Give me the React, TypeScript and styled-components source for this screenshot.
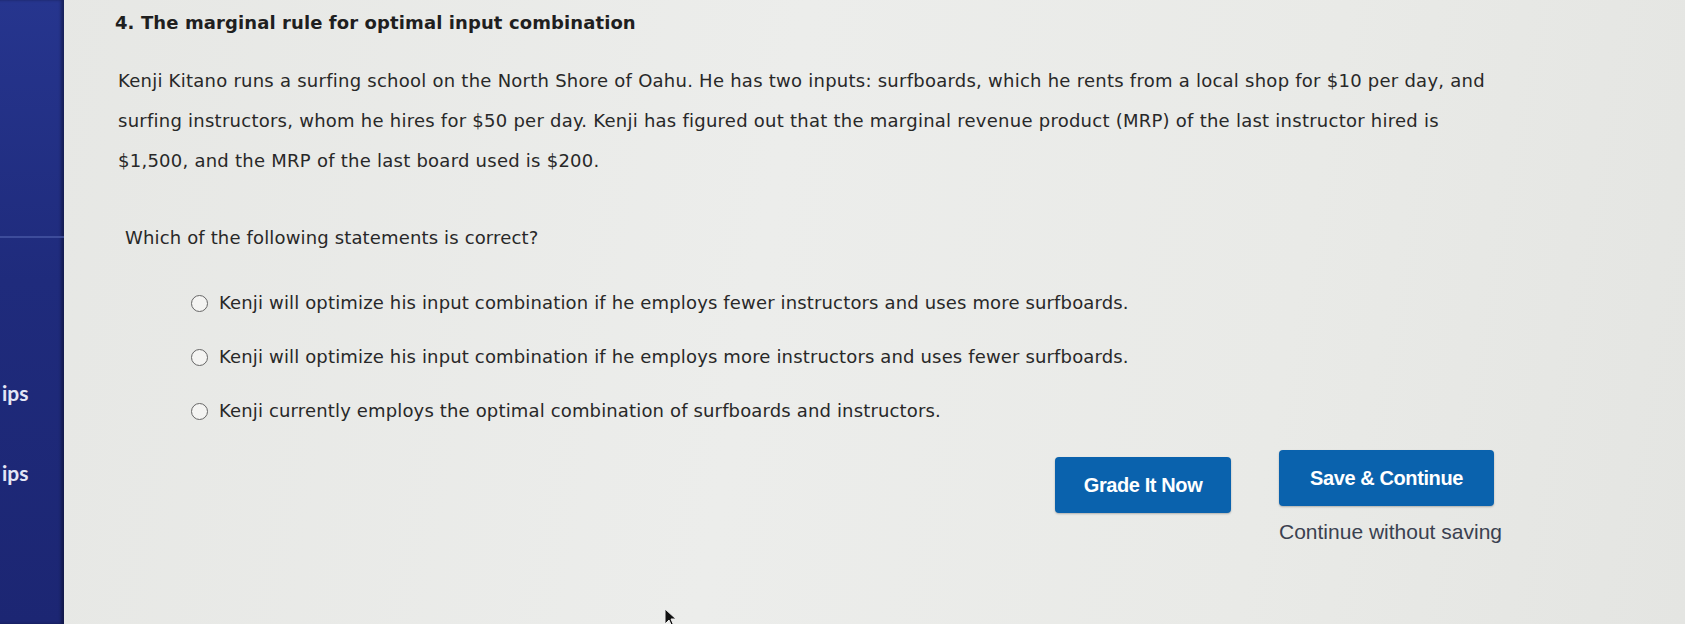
import styled, { createGlobalStyle } from "styled-components"

const GlobalStyle = createGlobalStyle`
  html, body {
    margin: 0;
    padding: 0;
    background: #e8e9e6;
  }
  body {
    font-family: "DejaVu Sans", Verdana, sans-serif;
    color: #282828;
  }
`

// Layout
const Page = styled.div`
  display: flex;
  width: 1685px;
  height: 624px;
  overflow: hidden;
  position: relative;
  background: linear-gradient(100deg, #e6e7e4 0%, #ecedeb 45%, #e9eae7 75%, #e4e5e2 100%);
`

const Sidebar = styled.aside`
  width: 64px;
  flex-shrink: 0;
  display: flex;
  flex-direction: column;
  overflow: hidden;
  background: linear-gradient(180deg, #26358e 0%, #1f2b7c 45%, #1c2673 100%);
  box-shadow: inset -3px 0 3px rgba(0, 0, 0, 0.35);
`

const SideRule = styled.div`
  margin-top: 236px;
  height: 2px;
  background: #4a5aa6;
  opacity: 0.7;
`

const SideLabel = styled.div<{ $top: number }>`
  margin-top: ${p => p.$top}px;
  margin-left: 2px;
  font-family: Lato, "Open Sans", sans-serif;
  font-weight: 700;
  font-size: 21px;
  line-height: 24px;
  color: #e4e6f6;
  white-space: nowrap;
`

const Main = styled.main`
  flex: 1;
  padding: 11px 0 0 51px;
  display: flex;
  flex-direction: column;
`

const Content = styled.div`
  width: 1387px;
  display: flex;
  flex-direction: column;
`

const Title = styled.h2`
  margin: 0;
  font-size: 18px;
  line-height: 24px;
  font-weight: 700;
  color: #1f1f1f;
  letter-spacing: 0.1px;
`

const Paragraph = styled.p`
  margin: 26px 0 0 3px;
  max-width: 1380px;
  font-size: 18px;
  line-height: 40px;
  letter-spacing: 0.25px;
`

const Question = styled.p`
  margin: 37px 0 0 10px;
  font-size: 18px;
  line-height: 40px;
  letter-spacing: 0.15px;
`

const Options = styled.ul`
  list-style: none;
  margin: 33px 0 0 76px;
  padding: 0;
  display: flex;
  flex-direction: column;
  gap: 30px;
`

const Option = styled.li`
  display: flex;
  align-items: center;
  gap: 11px;
  font-size: 18px;
  line-height: 24px;
  letter-spacing: 0.15px;
`

const Radio = styled.span`
  width: 15px;
  height: 15px;
  border-radius: 50%;
  border: 1.5px solid #666;
  background: #f4f4f2;
  flex-shrink: 0;
`

const Actions = styled.div`
  margin-top: 27px;
  display: flex;
  justify-content: flex-end;
  align-items: flex-start;
  gap: 48px;
`

const Stack = styled.div`
  display: flex;
  flex-direction: column;
  align-items: flex-start;
  gap: 14px;
`

const Button = styled.button<{ $width: number, $offset?: number }>`
  width: ${p => p.$width}px;
  height: 56px;
  margin-top: ${p => p.$offset ?? 0}px;
  border: 0;
  border-radius: 4px;
  background: #0a62ad;
  color: #fff;
  font-family: "Liberation Sans", Arial, sans-serif;
  font-weight: 700;
  font-size: 20px;
  letter-spacing: -0.4px;
  cursor: pointer;
  box-shadow: 0 1px 2px rgba(0, 0, 0, 0.25);
`

const TextLink = styled.a`
  font-family: "Liberation Sans", Arial, sans-serif;
  font-size: 21px;
  line-height: 24px;
  color: #3a4150;
  text-decoration: none;
  cursor: pointer;
`

const Cursor = styled.svg`
  position: absolute;
  left: 664px;
  top: 608px;
`

const options = [
  "Kenji will optimize his input combination if he employs fewer instructors and uses more surfboards.",
  "Kenji will optimize his input combination if he employs more instructors and uses fewer surfboards.",
  "Kenji currently employs the optimal combination of surfboards and instructors.",
]

const App = () => {
  return (
    <>
      <GlobalStyle />
      <Page>
        <Sidebar>
          <SideRule />
          <SideLabel $top={143}>ips</SideLabel>
          <SideLabel $top={56}>ips</SideLabel>
        </Sidebar>
        <Main>
          <Content>
            <Title>4. The marginal rule for optimal input combination</Title>
            <Paragraph>
              Kenji Kitano runs a surfing school on the North Shore of Oahu. He has two inputs: surfboards, which he rents from a local shop for $10 per day, and surfing instructors, whom he hires for $50 per day. Kenji has figured out that the marginal revenue product (MRP) of the last instructor hired is $1,500, and the MRP of the last board used is $200.
            </Paragraph>
            <Question>Which of the following statements is correct?</Question>
            <Options>
              {options.map(text => (
                <Option key={text}>
                  <Radio />
                  {text}
                </Option>
              ))}
            </Options>
            <Actions>
              <Button $width={176} $offset={7}>Grade It Now</Button>
              <Stack>
                <Button $width={215}>Save &amp; Continue</Button>
                <TextLink>Continue without saving</TextLink>
              </Stack>
            </Actions>
          </Content>
        </Main>
        <Cursor width="14" height="20" viewBox="0 0 14 20">
          <path d="M1 1 L1 16 L5 12 L8 19 L10 18 L7 11 L12 11 Z" fill="#111" stroke="#eee" strokeWidth="1" />
        </Cursor>
      </Page>
    </>
  )
}

export default App
